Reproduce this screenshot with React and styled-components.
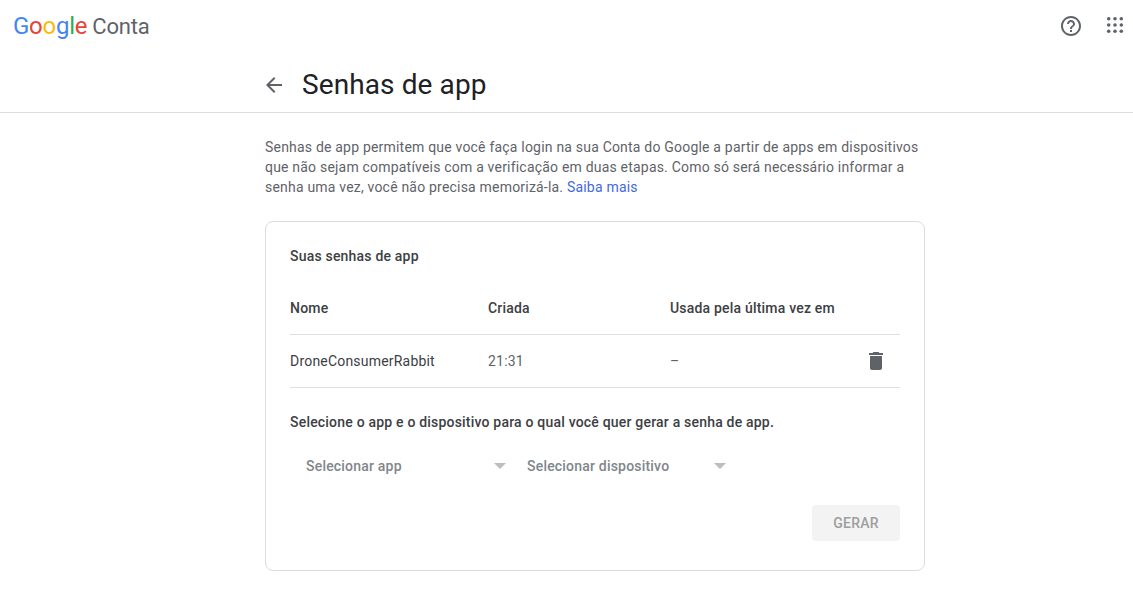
import React from 'react';
import styled, { createGlobalStyle } from 'styled-components';

const GlobalStyle = createGlobalStyle`
  html, body {
    margin: 0;
    padding: 0;
    background: #fff;
    font-family: Roboto, "Liberation Sans", sans-serif;
    letter-spacing: 0.2px;
    color: #202124;
  }
`;

const TopBar = styled.header`
  display: flex;
  align-items: center;
  justify-content: space-between;
  height: 52px;
  padding: 0 6px 0 13px;
`;

const Logo = styled.div`
  display: flex;
  align-items: baseline;
  font-family: Roboto, sans-serif;
  font-size: 24px;
  letter-spacing: -0.25px;
`;

const Letter = styled.span`
  color: ${p => p.$color};
`;

const LogoProduct = styled.span`
  margin-left: 5px;
  color: #5f6368;
  font-size: 22px;
  letter-spacing: -0.2px;
`;

const TopIcons = styled.div`
  display: flex;
  align-items: center;
  gap: 20px;
`;

const IconSlot = styled.span`
  display: flex;
  width: 24px;
  height: 24px;
`;

const TitleBar = styled.div`
  box-sizing: border-box;
  display: flex;
  align-items: center;
  height: 61px;
  padding: 6px 0 0 262px;
  border-bottom: 1px solid #dadce0;
`;

const BackArrow = styled.svg`
  width: 24px;
  height: 24px;
  margin-right: 16px;
`;

const Title = styled.h1`
  margin: 0;
  font-size: 28px;
  font-weight: 400;
  line-height: 36px;
  letter-spacing: 0.1px;
  color: #202124;
`;

const Main = styled.main`
  box-sizing: border-box;
  width: 660px;
  margin-left: 265px;
  padding-top: 24px;
`;

const Intro = styled.p`
  margin: 0 0 24px;
  font-size: 14px;
  line-height: 20px;
  color: #5f6368;
`;

const Link = styled.a`
  color: #4169e1;
  text-decoration: none;
`;

const Card = styled.section`
  box-sizing: border-box;
  height: 350px;
  padding: 24px 24px 0;
  border: 1px solid #dadce0;
  border-radius: 8px;
`;

const CardTitle = styled.h2`
  margin: 0;
  font-size: 14px;
  font-weight: 500;
  line-height: 20px;
  color: #3c4043;
`;

const Row = styled.div`
  box-sizing: border-box;
  display: grid;
  grid-template-columns: 198px 182px 1fr 36px;
  align-items: center;
  height: 53px;
  border-bottom: 1px solid #e0e0e0;
  font-size: 14px;
  color: #3c4043;
`;

const HeadRow = styled(Row)`
  margin-top: 16px;
  font-weight: 500;
  color: #3c4043;
`;

const Muted = styled.span`
  color: #5f6368;
`;

const Trash = styled.svg`
  width: 24px;
  height: 24px;
`;

const Prompt = styled.p`
  margin: 24px 0 0;
  font-size: 14px;
  font-weight: 500;
  line-height: 20px;
  color: #3c4043;
`;

const Selects = styled.div`
  display: flex;
  gap: 5px;
  margin-top: 10px;
  height: 48px;
`;

const Select = styled.div`
  box-sizing: border-box;
  display: flex;
  align-items: center;
  justify-content: space-between;
  width: ${p => p.$width}px;
  padding-left: 16px;
  font-size: 14px;
  font-weight: 500;
  color: #80868b;
`;

const Caret = styled.span`
  width: 0;
  height: 0;
  border-left: 6.5px solid transparent;
  border-right: 6.5px solid transparent;
  border-top: 6px solid #bdbdbd;
`;

const Footer = styled.div`
  display: flex;
  justify-content: flex-end;
  margin-top: 15px;
`;

const Button = styled.button`
  width: 88px;
  height: 36px;
  padding: 0;
  border: 0;
  border-radius: 4px;
  background: #f3f3f3;
  color: #9e9e9e;
  font-family: inherit;
  font-size: 14px;
  font-weight: 500;
  letter-spacing: 0.2px;
`;

const logoLetters = [
  ['G', '#4285f4'],
  ['o', '#ea4335'],
  ['o', '#fbbc05'],
  ['g', '#4285f4'],
  ['l', '#34a853'],
  ['e', '#ea4335'],
];

const gridDots = [4.7, 11, 17.3].flatMap(y => [5.7, 12, 18.3].map(x => [x, y]));

const App = () => (
  <>
    <GlobalStyle />
    <TopBar>
      <Logo>
        {logoLetters.map(([c, color], i) => (
          <Letter key={i} $color={color}>{c}</Letter>
        ))}
        <LogoProduct>Conta</LogoProduct>
      </Logo>
      <TopIcons>
        <IconSlot>
          <svg viewBox="0 0 24 24" width="24" height="24" fill="#5f6368">
            <path d="M11 18h2v-2h-2v2zm1-16C6.48 2 2 6.48 2 12s4.48 10 10 10 10-4.48 10-10S17.52 2 12 2zm0 18c-4.41 0-8-3.59-8-8s3.59-8 8-8 8 3.59 8 8-3.59 8-8 8zm0-14c-2.21 0-4 1.79-4 4h2c0-1.1.9-2 2-2s2 .9 2 2c0 2-3 1.75-3 5h2c0-2.25 3-2.5 3-5 0-2.21-1.79-4-4-4z" />
          </svg>
        </IconSlot>
        <IconSlot>
          <svg viewBox="0 0 24 24" width="24" height="24" fill="#5f6368">
            {gridDots.map(([x, y]) => (
              <circle key={`${x}-${y}`} cx={x} cy={y} r="1.8" />
            ))}
          </svg>
        </IconSlot>
      </TopIcons>
    </TopBar>

    <TitleBar>
      <BackArrow viewBox="0 0 24 24" fill="#5f6368">
        <path d="M20 11H7.83l5.59-5.59L12 4l-8 8 8 8 1.41-1.41L7.83 13H20v-2z" />
      </BackArrow>
      <Title>Senhas de app</Title>
    </TitleBar>

    <Main>
      <Intro>
        Senhas de app permitem que você faça login na sua Conta do Google a partir de apps em dispositivos
        que não sejam compatíveis com a verificação em duas etapas. Como só será necessário informar a
        senha uma vez, você não precisa memorizá-la. <Link href="#">Saiba mais</Link>
      </Intro>

      <Card>
        <CardTitle>Suas senhas de app</CardTitle>
        <HeadRow>
          <span>Nome</span>
          <span>Criada</span>
          <span>Usada pela última vez em</span>
        </HeadRow>
        <Row>
          <span>DroneConsumerRabbit</span>
          <Muted>21:31</Muted>
          <Muted>–</Muted>
          <Trash viewBox="0 0 24 24" fill="#5f6368">
            <path d="M15.5 4l-1-1h-5l-1 1H5v2h14V4zM6 19c0 1.1.9 2 2 2h8c1.1 0 2-.9 2-2V7H6v12z" />
          </Trash>
        </Row>
        <Prompt>Selecione o app e o dispositivo para o qual você quer gerar a senha de app.</Prompt>
        <Selects>
          <Select $width={216}>Selecionar app<Caret /></Select>
          <Select $width={215}>Selecionar dispositivo<Caret /></Select>
        </Selects>
        <Footer>
          <Button disabled>GERAR</Button>
        </Footer>
      </Card>
    </Main>
  </>
);

export default App;
